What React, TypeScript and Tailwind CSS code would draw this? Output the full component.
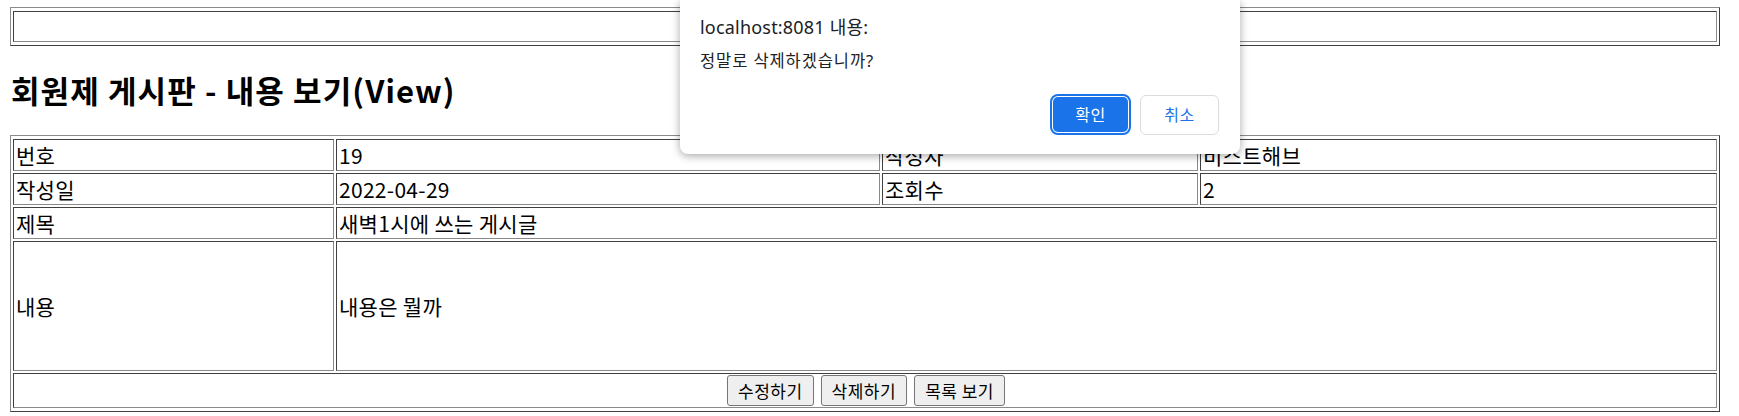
const cell =
  "flex items-center border border-t-[#404040] border-l-[#404040] border-b-[#8a8a8a] border-r-[#8a8a8a] pl-[2px] text-[21px] leading-[24px] tracking-[0.3px]"

const outer =
  "border border-t-[#8a8a8a] border-l-[#8a8a8a] border-b-[#404040] border-r-[#404040]"

function PageButton({ children }: { children: React.ReactNode }) {
  return (
    <button className="h-[31px] px-[10px] bg-[#efefef] border border-[#767676] rounded-[3px] text-[17px] leading-[20px] tracking-[0.5px] text-black">
      {children}
    </button>
  )
}

function ConfirmDialog() {
  return (
    <div className="absolute left-[680px] top-0 w-[560px] h-[154px] bg-white rounded-b-[8px] shadow-[0_2px_8px_rgba(0,0,0,0.35)] px-[20px] pr-[21px] font-['Noto_Sans','Noto_Sans_CJK_KR',sans-serif] text-[#202124]">
      <div className="pt-[15px] text-[18px] leading-[24px] tracking-[0.2px]">localhost:8081 내용:</div>
      <div className="mt-[12px] text-[16.5px] leading-[20px] tracking-[0.9px]">정말로 삭제하겠습니까?</div>
      <div className="mt-[23px] flex justify-end items-end gap-[9px]">
        <div className="border-2 border-[#1a73e8] rounded-[8px] p-[1px] bg-white">
          <button className="w-[75px] h-[35px] bg-[#1a73e8] rounded-[5px] text-white text-[16px] leading-[20px] tracking-[0.5px]">
            확인
          </button>
        </div>
        <button className="w-[79px] h-[40px] bg-white border border-[#dadce0] rounded-[6px] text-[#1a73e8] text-[16px] leading-[20px] tracking-[0.5px]">
          취소
        </button>
      </div>
    </div>
  )
}

export default function App() {
  return (
    <div className="relative w-[1739px] h-[416px] bg-white overflow-hidden text-black font-['Noto_Sans_CJK_KR',sans-serif]">
      <div className="pl-[10px] pt-[7px]">
        {/* menu table */}
        <div className={`w-[1710px] px-[2px] py-[3px] ${outer}`}>
          <div className={`h-[31px] ${cell}`}></div>
        </div>

        <h2 className="h-[87px] flex items-center pl-[1px] text-[31px] leading-[36px] font-bold tracking-[1.1px]">
          회원제 게시판 - 내용 보기(View)
        </h2>

        {/* view table */}
        <div
          className={`mt-[2px] w-[1710px] px-[2px] py-[3px] grid grid-cols-[321px_544px_316px_1fr] grid-rows-[32px_32px_32px_130px_35px] gap-[2px] ${outer}`}
        >
          <div className={cell}>번호</div>
          <div className={cell}>19</div>
          <div className={cell}>작성자</div>
          <div className={cell}>비스트해브</div>

          <div className={cell}>작성일</div>
          <div className={cell}>2022-04-29</div>
          <div className={cell}>조회수</div>
          <div className={cell}>2</div>

          <div className={cell}>제목</div>
          <div className={`col-span-3 ${cell}`}>새벽1시에 쓰는 게시글</div>

          <div className={cell}>내용</div>
          <div className={`col-span-3 ${cell}`}>내용은 뭘까</div>

          <div className={`col-span-4 justify-center gap-[7px] ${cell}`}>
            <PageButton>수정하기</PageButton>
            <PageButton>삭제하기</PageButton>
            <PageButton>목록 보기</PageButton>
          </div>
        </div>
      </div>

      <ConfirmDialog />
    </div>
  )
}
